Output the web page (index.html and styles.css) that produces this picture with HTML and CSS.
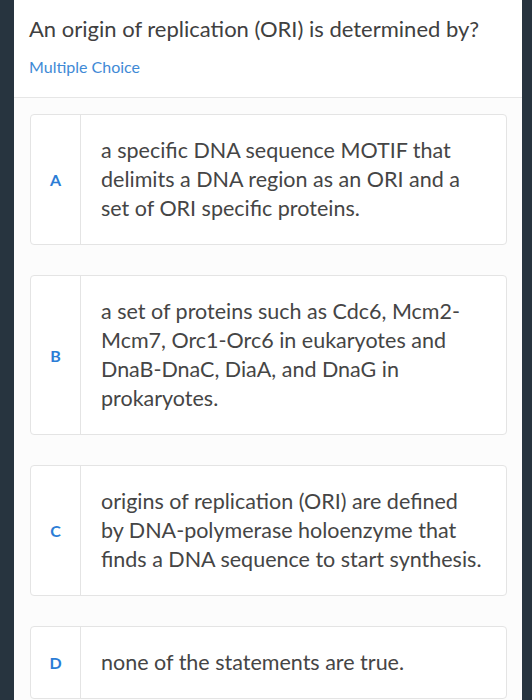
FILE: index.html
```html
<!DOCTYPE html>
<html>
<head>
<meta charset="utf-8">
<link rel="stylesheet" href="styles.css">
</head>
<body>
<div class="frame">
  <div class="page">
    <header class="head">
      <h1 class="title">An origin of replication (ORI) is determined by?</h1>
      <div class="kind">Multiple Choice</div>
    </header>
    <div class="choices">
      <div class="choice">
        <div class="letter">A</div>
        <div class="text">a specific DNA sequence MOTIF that delimits a DNA region as an ORI and a set of ORI specific proteins.</div>
      </div>
      <div class="choice">
        <div class="letter">B</div>
        <div class="text">a set of proteins such as Cdc6, Mcm2-Mcm7, Orc1-Orc6 in eukaryotes and DnaB-DnaC, DiaA, and DnaG in prokaryotes.</div>
      </div>
      <div class="choice">
        <div class="letter">C</div>
        <div class="text">origins of replication (ORI) are defined by DNA-polymerase holoenzyme that finds a DNA sequence to start synthesis.</div>
      </div>
      <div class="choice">
        <div class="letter">D</div>
        <div class="text">none of the statements are true.</div>
      </div>
    </div>
  </div>
</div>
</body>
</html>
```
FILE: styles.css
```css
html, body {
  margin: 0;
  padding: 0;
  height: 100%;
  background: #27343f;
}
.frame {
  display: flex;
  height: 700px;
  padding-left: 14px;
  padding-right: 10px;
  box-sizing: border-box;
  overflow: hidden;
}
.page {
  flex: 1;
  background: #fcfcfc;
  font-family: Lato, "Open Sans", sans-serif;
}
.head {
  background: #ffffff;
  border-bottom: 1px solid #e6e6e6;
  padding: 14px 15px 0;
  height: 83px;
  box-sizing: content-box;
}
.title {
  margin: 0;
  font-size: 22px;
  font-weight: 400;
  color: #404040;
  line-height: 30px;
}
.kind {
  margin-top: 12px;
  font-size: 16px;
  color: #3f8ad6;
  line-height: 22px;
}
.choices {
  display: flex;
  flex-direction: column;
  gap: 30px;
  padding: 16px 15px 0 16px;
}
.choice {
  display: flex;
  background: #ffffff;
  border: 1px solid #e4e4e4;
  border-radius: 4px;
}
.letter {
  width: 49px;
  flex: none;
  border-right: 1px solid #e4e4e4;
  display: flex;
  align-items: center;
  justify-content: center;
  font-size: 16px;
  font-weight: 700;
  color: #2b7dd6;
}
.text {
  padding: 21px 21px 21px 20px;
  font-size: 21.5px;
  line-height: 29px;
  color: #454545;
}
```
